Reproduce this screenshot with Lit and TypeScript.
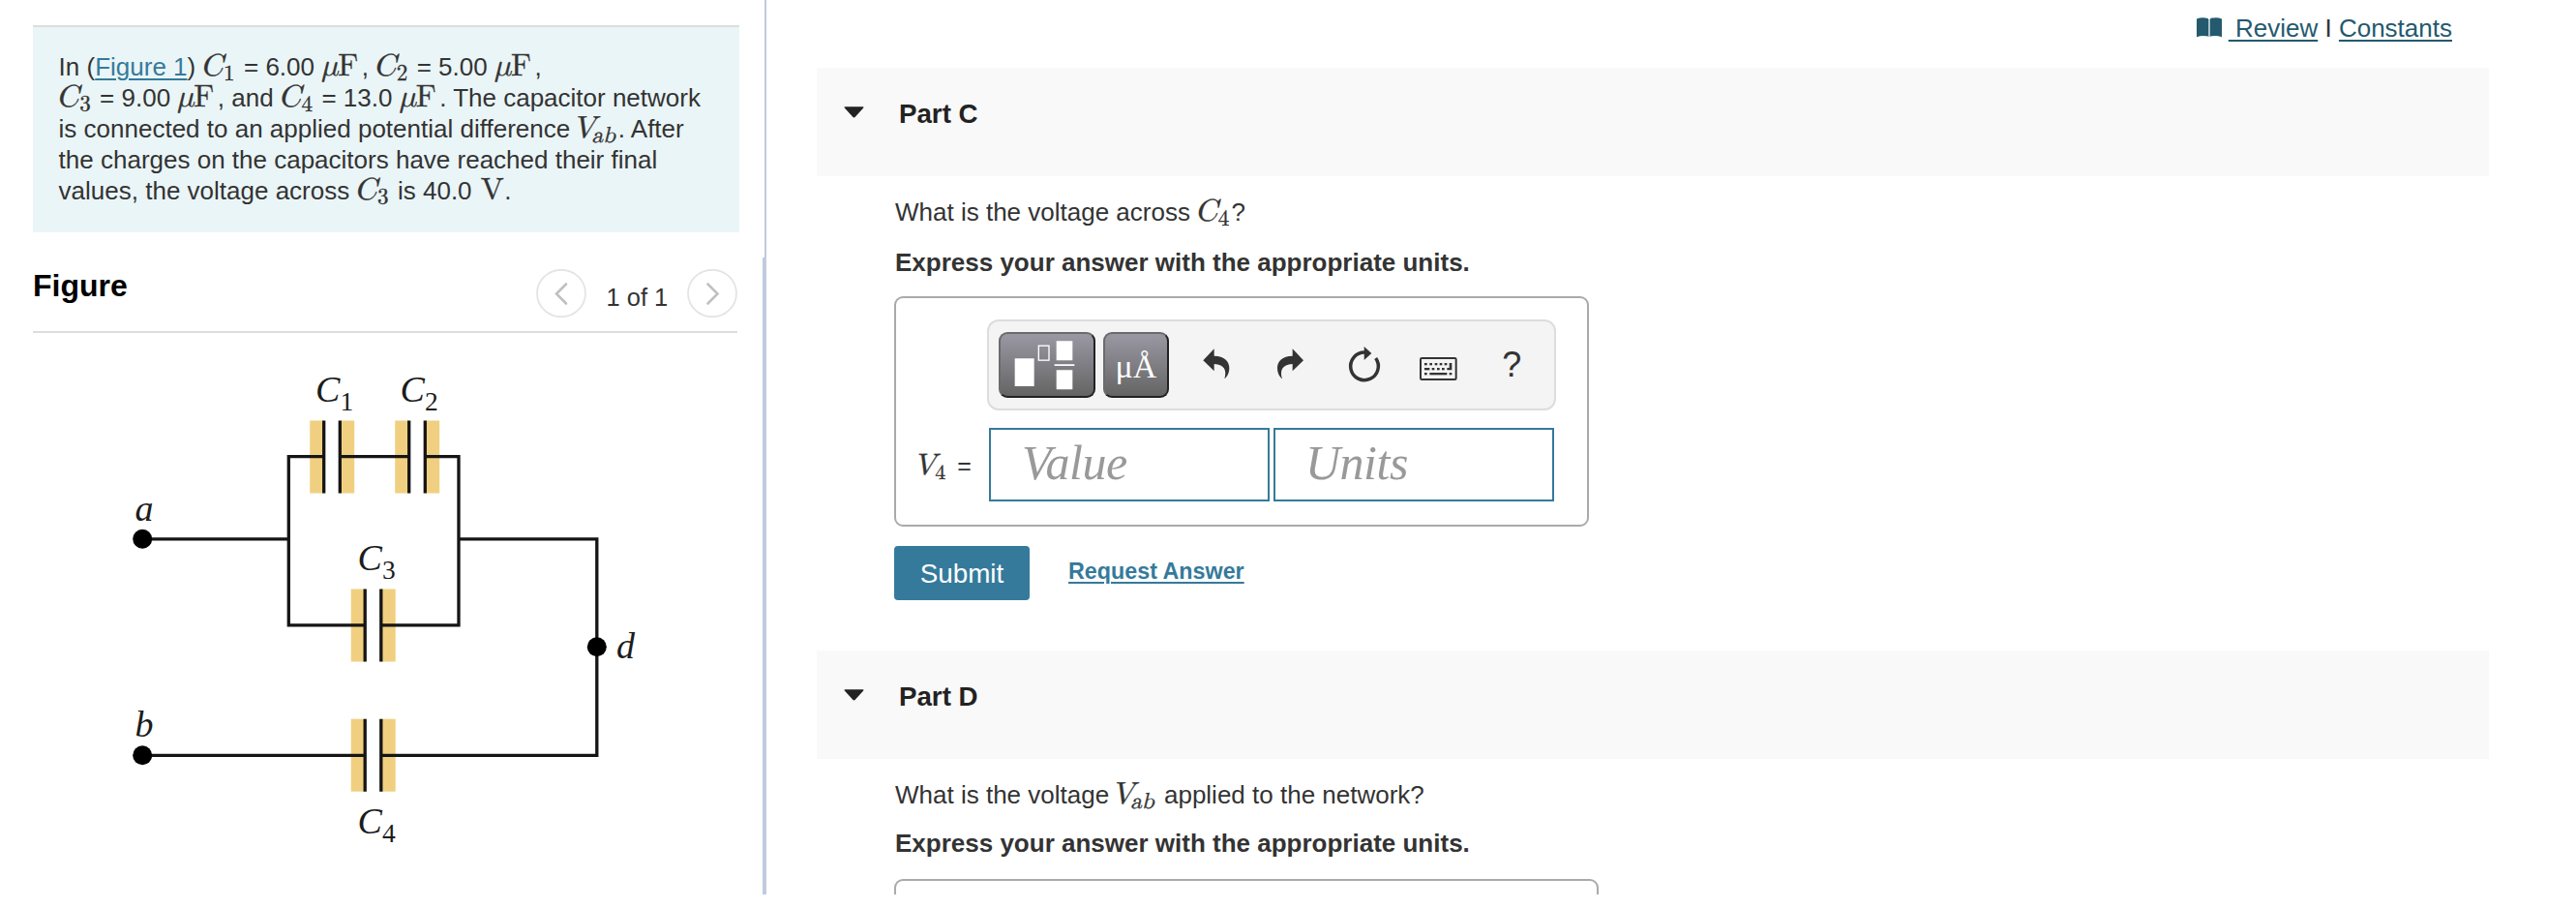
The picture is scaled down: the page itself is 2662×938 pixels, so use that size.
import { LitElement, html, svg, css } from "lit";

const sym = (base: string, sub: string, it = false) =>
  html`<span class="sym ${it ? "sym-v" : ""}"><i>${base}</i><span class="sub">${it ? html`<i>${sub}</i>` : sub}</span></span>`;

const microfarad = html`<span class="unit"><i>μ</i>F</span>`;

class CircuitFigure extends LitElement {
  static styles = css`
    :host { display: block; }
    svg { display: block; }
    .plate { fill: #f0d080; }
    .wire { fill: none; stroke: #151515; stroke-width: 3.3; }
    .dot { fill: #000; }
    .lbl { font: italic 38px "Liberation Serif", serif; fill: #1c1c1c; }
    .idx { font: 27.5px "Liberation Serif", serif; fill: #1c1c1c; }
  `;

  capacitor(x: number, y: number) {
    return svg`
      <rect class="plate" x=${x - 22.8} y=${y} width="15" height="75"></rect>
      <rect class="plate" x=${x + 8.2} y=${y} width="15" height="75"></rect>
      <path class="wire" d="M${x - 8.3} ${y}v75M${x + 8.3} ${y}v75"></path>`;
  }

  label(x: number, y: number, n: string) {
    return svg`
      <text class="lbl" x=${x - 0.5} y=${y}>C</text>
      <text class="idx" x=${x + 25} y=${y + 9}>${n}</text>`;
  }

  render() {
    return html`
      <svg width="728" height="580" viewBox="34 344 728 580">
        ${this.capacitor(343, 434.5)} ${this.capacitor(431, 434.5)}
        ${this.capacitor(385.5, 608.5)} ${this.capacitor(385.5, 742.7)}
        <path class="wire" d="M147 556.8H298.3M334.7 471.7H298.3V645.8H377.2M351.3 471.7H422.7M439.3 471.7H474V645.8H393.8M474 556.8H616.8V780.3H393.8M377.2 780.3H147"></path>
        <circle class="dot" cx="147.2" cy="556.8" r="10"></circle>
        <circle class="dot" cx="147.2" cy="780.3" r="10"></circle>
        <circle class="dot" cx="616.8" cy="668.2" r="10"></circle>
        ${this.label(326.4, 415.2, "1")} ${this.label(414, 415.2, "2")}
        ${this.label(370, 589, "3")} ${this.label(370, 860.8, "4")}
        <text class="lbl" x="139.5" y="538">a</text>
        <text class="lbl" x="139.5" y="760.500">b</text>
        <text class="lbl" x="637" y="680">d</text>
      </svg>`;
  }
}
customElements.define("circuit-figure", CircuitFigure);

class AppRoot extends LitElement {
  static styles = css`
    :host { display: block; height: 938px; overflow: hidden; background: #fff; color: #333;
      font: 26px/32px "Liberation Sans", Arial, sans-serif; }
    * { box-sizing: border-box; }
    .page { display: flex; height: 924px; overflow: hidden; }
    a { color: #357a9b; text-decoration: underline; text-decoration-thickness: 2px; text-underline-offset: 3px; }

    .side { width: 792px; flex: none; display: flex; flex-direction: column; }
    .intro-wrap { height: 266px; padding: 26px 26px 0 34px; border-right: 2px solid #bfcbde; }
    .intro { height: 214px; padding: 25px 0 0 26.6px; background: #eaf5f7; border-top: 2px solid #ddd; }
    .line { height: 32px; white-space: nowrap; }
    .figure { flex: 1; border-right: 4px solid #bfcbde; padding: 0 26px 0 34px; }
    .fig-head { height: 78px; border-bottom: 2px solid #ddd; display: flex; align-items: flex-start; padding-top: 12px; }
    .fig-title { flex: 1; font-size: 32px; font-weight: bold; color: #000; line-height: 34px; padding-top: 0; }
    .pager { display: flex; gap: 20.5px; }
    .count { padding-top: 12.5px; font-size: 25.5px; width: 63px; white-space: nowrap; }
    .ring { display: block; width: 52px; height: 50px; }

    .sym, .unit, .volt, .eqn i, .eqn .sub { font-family: "Latin Modern Math", "Liberation Serif", serif; line-height: 0; -webkit-text-stroke: 0.35px #333; }
    .sym, .unit, .volt { display: inline-block; font-size: 32px; }
    .sym { width: 35.3px; white-space: nowrap; }
    .sym i { margin-left: -2.5px; }
    .sym-v { width: 42.4px; }
    .sym-v i { margin-left: -5px; }
    .unit { width: 41.5px; padding-left: 0; }
    .volt { width: 26.5px; padding-left: 2px; }
    .sub { font-size: 23px; vertical-align: -4.5px; line-height: 0; margin-left: 1px; }
    .sym-v .sub { margin-left: -4px; }
    .sym-v .sub i { margin-left: 0; }

    .main { flex: 1; padding-left: 52px; display: flex; flex-direction: column; }
    .top { height: 70px; width: 1690px; flex: none; display: flex; justify-content: flex-end; padding-top: 13px; white-space: pre; }
    .top a { color: #24596e; }
    .book { width: 26px; height: 21px; margin: 5px 7px 0 0; }
    .head { height: 112px; width: 1728px; flex: none; background: #f9f9f9; padding: 39px 0 0 28px; display: flex; align-items: flex-start; }
    .caret { width: 21px; height: 12px; margin: 1px 36px 0 0; }
    .part { font-size: 27.7px; line-height: 34px; font-weight: bold; color: #222; margin-top: -8.5px; }
    .body { padding: 21px 0 0 80px; height: 490px; flex: none; }
    .q { padding-left: 1px; height: 50px; white-space: nowrap; }
    .express { padding-left: 1px; font-weight: bold; height: 53px; }
    .tall .q { height: 52px; }
    .tall .express { height: 51px; }
    .box { width: 718px; height: 238px; border: 2px solid #aaa; border-radius: 9px; padding: 22px 0 0 23px; }
    .wide { width: 728px; }
    .bar { width: 588px; height: 94px; margin-left: 71px; border: 2px solid #ddd; border-radius: 12px; background: #f4f4f4; padding: 0 0 0 10px; display: flex; align-items: center; }
    .dark { height: 68px; border: 2px solid; border-color: #6b6b6b #222 #222 #6b6b6b; border-radius: 9px; background: linear-gradient(#9a98a3, #646464); color: #fff; margin-right: 8px; display: block; }
    .tpl { width: 100px; }
    .ang { width: 68px; margin-right: 26.7px; font: 34px/67px "Liberation Serif", serif; text-align: center; }
    .ico { width: 44px; height: 44px; margin-right: 32.4px; flex: none; fill: #333; }
    .help { width: 44px; font-size: 36px; line-height: 44px; text-align: center; color: #333; }
    .row { display: flex; margin-top: 18px; }
    .eqn { width: 73px; font-size: 25px; line-height: 32px; padding-top: 23px; white-space: nowrap; }
    .eqn i { font-size: 31px; margin-left: -5px; }
    .eqn .sub { font-size: 22px; margin: 0 12px 0 -1px; }
    .field { width: 290px; height: 76px; border: 2px solid #357a9b; margin-right: 4px; padding-left: 32px; font: italic 50px/69px "Liberation Serif", serif; letter-spacing: -0.5px; color: #999; }
    .units { padding-left: 31px; }
    .actions { display: flex; margin-top: 20px; align-items: flex-start; }
    .submit { width: 140px; height: 56px; border-radius: 4px; background: #357a9b; color: #fff; font-size: 27.8px; line-height: 57px; text-align: center; }
    .request { margin: 10px 0 0 40px; font-size: 23.3px; font-weight: bold; }
  `;

  ring(d: string) {
    return html`<svg class="ring" viewBox="0 0 52 50">
      <ellipse cx="26" cy="25" rx="25" ry="24.2" fill="#fff" stroke="#e4e4e4" stroke-width="1.8"></ellipse>
      <path d=${d} fill="none" stroke="#c0c0c0" stroke-width="2.6" stroke-linecap="round"></path>
    </svg>`;
  }

  head(name: string) {
    return html`<div class="head">
      <svg class="caret" viewBox="0 0 21 12"><path d="M1.4 .2H19.6Q21.2 .4 20 1.8L12 10.6Q10.5 12.4 9 10.6L1 1.8Q-.2 .4 1.4 .2Z" fill="#222"></path></svg>
      <div class="part">${name}</div>
    </div>`;
  }

  keyboard() {
    const keys: number[][] = [
      [755, 135, 8], [771, 135, 8], [787, 135, 8], [802, 135, 8], [817, 135, 8],
      [755, 150, 16], [778, 150, 8], [794, 150, 8], [809, 150, 8],
      [755, 165, 8], [771, 165, 54], [832, 165, 8],
    ];
    return svg`<rect x="743" y="120" width="110" height="66" rx="4" fill="none" stroke="#333" stroke-width="6"></rect>
      ${keys.map(([x, y, w]) => svg`<rect x=${x} y=${y} width=${w} height="7"></rect>`)}
      <path d="M832 135h8v22h-15v-7h7z"></path>`;
  }

  render() {
    return html`
      <div class="page">
        <div class="side">
          <div class="intro-wrap">
            <div class="intro">
              <div class="line">In (<a>Figure 1</a>) ${sym("C", "1")} = 6.00 ${microfarad}, ${sym("C", "2")} = 5.00 ${microfarad},</div>
              <div class="line">${sym("C", "3")} = 9.00 ${microfarad}, and ${sym("C", "4")} = 13.0 ${microfarad}. The capacitor network</div>
              <div class="line">is connected to an applied potential difference ${sym("V", "ab", true)}. After</div>
              <div class="line">the charges on the capacitors have reached their final</div>
              <div class="line">values, the voltage across ${sym("C", "3")} is 40.0 <span class="volt">V</span>.</div>
            </div>
          </div>
          <div class="figure">
            <div class="fig-head">
              <div class="fig-title">Figure</div>
              <div class="pager">
                ${this.ring("M31 15.5L21 25.5L31 35.5")}
                <div class="count">1 of 1</div>
                ${this.ring("M21.5 15.5L31.5 25.5L21.5 35.5")}
              </div>
            </div>
            <circuit-figure></circuit-figure>
          </div>
        </div>
        <div class="main">
          <div class="top"><svg class="book" viewBox="0 0 26 21"><path d="M0 1.5Q6-1 12 1.3V19.6Q6 18 0 20.3ZM14 1.3Q20-1 26 1.5V20.3Q20 18 14 19.6Z" fill="#24596e"></path><path d="M12 2h2v18h-2z" fill="#a9c0ca"></path></svg><a> Review</a> I <a>Constants</a></div>
          ${this.head("Part C")}
          <div class="body tall">
            <div class="q">What is the voltage across ${sym("C", "4")}?</div>
            <div class="express">Express your answer with the appropriate units.</div>
            <div class="box">
              <div class="bar">
                <svg class="dark tpl" viewBox="68 68 288 192">
                  <path fill="#fff" d="M112 144h60v86h-60zM241 90h50v60h-50zM235 162h62v5h-62zM241 180h50v60h-50z"></path>
                  <rect x="186" y="104.500" width="32" height="45" fill="none" stroke="#fff" stroke-width="4"></rect>
                </svg>
                <div class="dark ang">μÅ</div>
                <svg class="ico" viewBox="44 75 132 132"><path d="M69 127L103 91V113C135 113 150 130 150 151C150 166 143 178 135 184C143 160 136 139 103 138V160Z"></path></svg>
                <svg class="ico" viewBox="273 75 132 132"><path d="M381 127L347 91V113C315 113 300 130 300 151C300 166 307 178 315 184C307 160 314 139 347 138V160Z"></path></svg>
                <svg class="ico" viewBox="501 75 132 132"><path d="M570 102A43 43 0 1 0 605 120" fill="none" stroke="#333" stroke-width="10.500"></path><path d="M569 84L592 105L569 126Z"></path></svg>
                <svg class="ico" viewBox="731 75 132 132">${this.keyboard()}</svg>
                <div class="help">?</div>
              </div>
              <div class="row">
                <div class="eqn"><i>V</i><span class="sub">4</span>=</div>
                <div class="field">Value</div>
                <div class="field units">Units</div>
              </div>
            </div>
            <div class="actions">
              <div class="submit">Submit</div>
              <a class="request">Request Answer</a>
            </div>
          </div>
          ${this.head("Part D")}
          <div class="body">
            <div class="q">What is the voltage ${sym("V", "ab", true)} applied to the network?</div>
            <div class="express">Express your answer with the appropriate units.</div>
            <div class="box wide"></div>
          </div>
        </div>
      </div>`;
  }
}
customElements.define("app-root", AppRoot);
